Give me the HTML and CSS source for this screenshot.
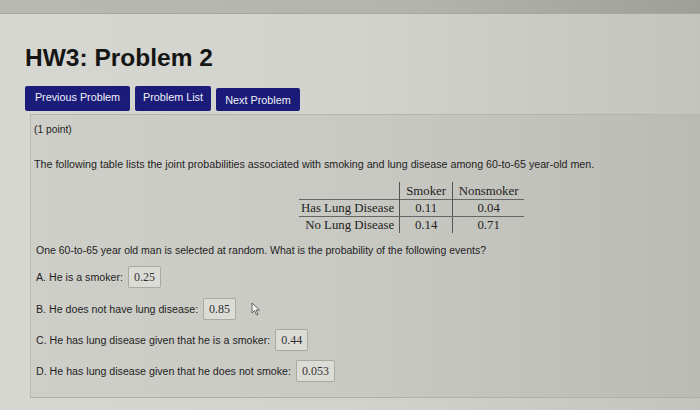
FILE: index.html
```html
<!DOCTYPE html>
<html>
<head>
<meta charset="utf-8">
<link rel="stylesheet" href="styles.css">
</head>
<body>
<div class="topbar"></div>
<div class="page">
  <h1 class="title">HW3: Problem 2</h1>
  <div class="nav">
    <span class="btn">Previous Problem</span>
    <span class="btn">Problem List</span>
    <span class="btn btn-next">Next Problem</span>
  </div>
  <div class="panel">
    <p class="point">(1 point)</p>
    <p class="intro">The following table lists the joint probabilities associated with smoking and lung disease among 60-to-65 year-old men.</p>
    <div class="table-wrap">
      <table class="prob">
        <tr class="head"><td class="rh"></td><td class="c1">Smoker</td><td class="c2">Nonsmoker</td></tr>
        <tr class="r1"><td class="rh">Has Lung Disease</td><td class="c1">0.11</td><td class="c2">0.04</td></tr>
        <tr><td class="rh">No Lung Disease</td><td class="c1">0.14</td><td class="c2">0.71</td></tr>
      </table>
    </div>
    <p class="question">One 60-to-65 year old man is selected at random. What is the probability of the following events?</p>
    <div class="item item-a">A. He is a smoker: <span class="ans">0.25</span></div>
    <div class="item item-b">B. He does not have lung disease: <span class="ans">0.85</span>
      <svg class="cursor" width="12" height="14" viewBox="0 0 12 14"><path d="M1 1 L1 11 L3.5 8.5 L5.5 13 L7 12.3 L5 8 L8.5 8 Z" fill="#f4f4f0" stroke="#555" stroke-width="0.9" stroke-linejoin="round"/></svg>
    </div>
    <div class="item">C. He has lung disease given that he is a smoker: <span class="ans">0.44</span></div>
    <div class="item">D. He has lung disease given that he does not smoke: <span class="ans">0.053</span></div>
  </div>
</div>
</body>
</html>
```
FILE: styles.css
```css
html, body {
  margin: 0;
  padding: 0;
}
body {
  width: 700px;
  height: 410px;
  overflow: hidden;
  background: linear-gradient(90deg, #d7d7d1 0%, #d3d3cd 50%, #c4c4bf 100%);
  font-family: "Liberation Sans", Arial, sans-serif;
  color: #1e1e1e;
}
.topbar {
  height: 13px;
  background: linear-gradient(90deg, #b9b9b4 0%, #b4b4ae 60%, #9f9f9a 100%);
  border-bottom: 1px solid #a8a8a2;
}
.page {
  padding-left: 25px;
}
.title {
  margin: 31px 0 0 0;
  font-size: 24.5px;
  font-weight: bold;
  line-height: 26px;
  color: #151515;
}
.nav {
  display: flex;
  gap: 5px;
  margin-top: 15px;
  align-items: flex-start;
}
.btn {
  display: inline-block;
  background: #1b1c7a;
  color: #f0f0f8;
  font-size: 10.8px;
  height: 25px;
  line-height: 23px;
  padding: 0 8px;
  border-radius: 2px;
  box-sizing: border-box;
}
.btn:first-child { width: 105px; text-align: center; }
.btn-next {
  margin-top: 2px;
  width: 84px;
  text-align: center;
  height: 23px;
  line-height: 24px;
}
.panel {
  margin-left: 5px;
  margin-top: 3px;
  height: 284px;
  background: linear-gradient(90deg, #cfcfc9 0%, #c9c9c3 50%, #bbbbb6 100%);
  border-top: 1px solid #b5b5b0;
  border-left: 1px solid #bcbcb6;
  border-bottom: 1px solid #b0b0aa;
  padding: 9px 0 0 3px;
  box-sizing: border-box;
}
.point {
  margin: 0;
  font-size: 10.3px;
  line-height: 12px;
}
.intro {
  margin: 22px 0 0 0;
  font-size: 10.7px;
  line-height: 12px;
}
.table-wrap {
  display: flex;
  padding-left: 265px;
  margin-top: 12px;
}
.prob {
  border-collapse: collapse;
  font-family: "Liberation Serif", "Times New Roman", serif;
  font-size: 12.8px;
  color: #222;
}
.prob td {
  padding: 1px 4px 1px 4px;
  line-height: 14px;
}
.prob .c1, .prob .c2 {
  text-align: center;
  border-left: 1px solid #555;
}
.prob .c1 { width: 44px; }
.prob .c2 { width: 63px; }
.prob .head td { padding-top: 2px; }
.prob .r1 td {
  border-top: 1px solid #666;
  border-bottom: 1px solid #666;
}
.prob .rh { text-align: right; padding-right: 5px; padding-left: 2px; }
.question {
  margin: 11px 0 0 2px;
  font-size: 10.5px;
  line-height: 12px;
}
.item {
  display: flex;
  align-items: center;
  gap: 5px;
  margin-left: 2px;
  font-size: 10.65px;
  height: 22px;
  margin-top: 9px;
}
.item-a { margin-top: 10px; }
.item-b { margin-top: 10px; }
.ans {
  display: inline-block;
  border: 1px solid #a9a9a4;
  background: #dcdcd6;
  font-family: "Liberation Serif", "Times New Roman", serif;
  font-size: 12px;
  color: #333;
  height: 20px;
  line-height: 20px;
  padding: 0 5px;
  border-radius: 2px;
}
.cursor {
  margin-left: 10px;
}
```
